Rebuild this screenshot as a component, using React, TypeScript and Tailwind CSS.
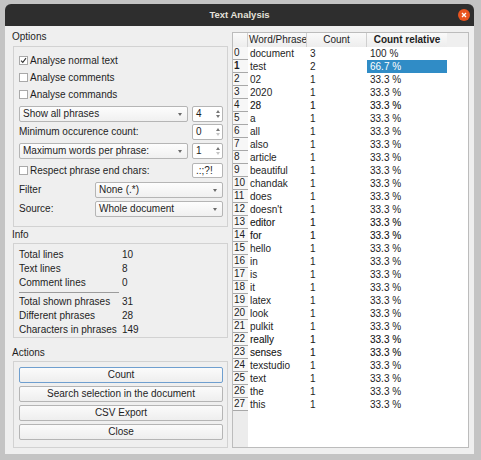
import React from "react";

type Row = { word: string; count: number; rel: string };

const WORDS = [
  "document", "test", "02", "2020", "28", "a", "all", "also", "article", "beautiful",
  "chandak", "does", "doesn't", "editor", "for", "hello", "in", "is", "it", "latex",
  "look", "pulkit", "really", "senses", "texstudio", "text", "the", "this",
];

const ROWS: Row[] = WORDS.map((w, i) => ({
  word: w,
  count: i === 0 ? 3 : i === 1 ? 2 : 1,
  rel: i === 0 ? "100 %" : i === 1 ? "66.7 %" : "33.3 %",
}));

// rows that render a little heavier in the screenshot
const HEAVY = [4, 13, 14, 22, 23];

function CheckBox({ checked, label }: { checked?: boolean; label: string }) {
  return (
    <div className="flex items-center gap-[2px]">
      <span className="w-[9px] h-[9px] bg-white border border-[#a9a9a9] flex items-center justify-center">
        {checked && (
          <svg width="7" height="7" viewBox="0 0 7 7">
            <path d="M1 3.6 L2.8 5.4 L6 1.2" stroke="#333" strokeWidth="1.1" fill="none" />
          </svg>
        )}
      </span>
      <span>{label}</span>
    </div>
  );
}

function Combo({ text, className }: { text: string; className: string }) {
  return (
    <div
      className={`h-[16px] border border-[#b5b5b5] rounded-[2px] bg-gradient-to-b from-[#fdfdfd] to-[#f0f0f0] flex items-center pl-[3px] pr-[5px] ${className}`}
    >
      <span className="flex-1 whitespace-nowrap">{text}</span>
      <span className="w-0 h-0 border-x-[2.5px] border-x-transparent border-t-[3px] border-t-[#6a6a6a]" />
    </div>
  );
}

function Spin({ value, downOff }: { value: string; downOff?: boolean }) {
  return (
    <div className="w-[31px] h-[16px] border border-[#b5b5b5] rounded-[2px] bg-white flex items-center">
      <span className="flex-1 pl-[3px]">{value}</span>
      <div className="w-[9px] h-full flex flex-col items-center justify-center gap-[2px]">
        <span className="w-0 h-0 border-x-[2.5px] border-x-transparent border-b-[3px] border-b-[#777]" />
        <span
          className={`w-0 h-0 border-x-[2.5px] border-x-transparent border-t-[3px] ${
            downOff ? "border-t-[#c4c4c4]" : "border-t-[#777]"
          }`}
        />
      </div>
    </div>
  );
}

function InfoLine({ label, value }: { label: string; value: string }) {
  return (
    <div className="h-[14px] flex items-center">
      <span className="w-[103px] whitespace-nowrap">{label}</span>
      <span>{value}</span>
    </div>
  );
}

function Button({ label, focus }: { label: string; focus?: boolean }) {
  return (
    <div
      className={`h-[16px] rounded-[2px] flex items-center justify-center bg-gradient-to-b from-[#fbfbfb] to-[#eeeeee] border ${
        focus ? "border-[#6f9fcf]" : "border-[#b5b5b5]"
      }`}
    >
      {label}
    </div>
  );
}

export default function App() {
  return (
    <div className="w-[481px] h-[460px] bg-[#c4c4c4] pt-[4px] pl-[5px] font-['Liberation_Sans',Arial,sans-serif] text-[10px] leading-none text-[#1e1e1e]">
      <div className="w-[469px] h-[450px] rounded-t-[6px] overflow-hidden flex flex-col">
        {/* title bar */}
        <div className="h-[22px] bg-[#2e2e2e] flex items-center justify-center relative">
          <span className="font-bold text-[9.5px] text-[#e4e1da]">Text Analysis</span>
          <span className="absolute right-[4px] top-[5px] w-[12px] h-[12px] rounded-full bg-[#e9541f] flex items-center justify-center">
            <svg width="6" height="6" viewBox="0 0 6 6">
              <path d="M1 1 L5 5 M5 1 L1 5" stroke="#fff" strokeWidth="1.3" />
            </svg>
          </span>
        </div>

        {/* body */}
        <div className="flex-1 bg-[#efefef] flex">
          {/* left panel */}
          <div className="w-[223px] flex flex-col">
            <div className="h-[20px] pt-[2px] pl-[7px] flex items-center">Options</div>
            <div className="ml-[8px] w-[215px] h-[181px] border border-[#d2d2d2] pt-[5px] pl-[5px] pr-[4px] flex flex-col">
              <div className="h-[17px] flex items-center">
                <CheckBox checked label="Analyse normal text" />
              </div>
              <div className="h-[17px] flex items-center">
                <CheckBox label="Analyse comments" />
              </div>
              <div className="h-[17px] flex items-center">
                <CheckBox label="Analyse commands" />
              </div>
              <div className="mt-[3px] flex gap-[4px]">
                <Combo text="Show all phrases" className="w-[169px]" />
                <Spin value="4" />
              </div>
              <div className="mt-[2px] h-[16px] flex items-center">
                <span className="flex-1">Minimum occurence count:</span>
                <Spin value="0" downOff />
              </div>
              <div className="mt-[3px] flex gap-[4px]">
                <Combo text="Maximum words per phrase:" className="w-[169px]" />
                <Spin value="1" downOff />
              </div>
              <div className="mt-[4px] h-[15px] flex items-center">
                <div className="flex-1">
                  <CheckBox label="Respect phrase end chars:" />
                </div>
                <div className="w-[31px] h-[15px] border border-[#b5b5b5] rounded-[2px] bg-white flex items-center pl-[3px]">
                  .:;?!
                </div>
              </div>
              <div className="mt-[4px] h-[16px] flex items-center">
                <span className="w-[76px]">Filter</span>
                <Combo text="None (.*)" className="w-[128px]" />
              </div>
              <div className="mt-[3px] h-[16px] flex items-center">
                <span className="w-[76px]">Source:</span>
                <Combo text="Whole document" className="w-[128px]" />
              </div>
            </div>

            <div className="h-[16px] pl-[7px] flex items-center">Info</div>
            <div className="ml-[8px] w-[215px] h-[95px] border border-[#d2d2d2] pt-[4px] pl-[5px] flex flex-col">
              <InfoLine label="Total lines" value="10" />
              <InfoLine label="Text lines" value="8" />
              <InfoLine label="Comment lines" value="0" />
              <div className="mt-[2px] mb-[2px] w-[100px] h-px bg-[#9c9c9c]" />
              <InfoLine label="Total shown phrases" value="31" />
              <InfoLine label="Different phrases" value="28" />
              <InfoLine label="Characters in phrases" value="149" />
            </div>

            <div className="h-[23px] pt-[7px] pl-[7px] flex items-center">Actions</div>
            <div className="ml-[8px] w-[215px] h-[87px] border border-[#d2d2d2] pt-[5px] pl-[5px] pr-[4px] flex flex-col gap-[3px]">
              <Button label="Count" focus />
              <Button label="Search selection in the document" />
              <Button label="CSV Export" />
              <Button label="Close" />
            </div>
          </div>

          {/* results table */}
          <div className="ml-[4px] mt-[6px] w-[237px] h-[416px] border border-[#bcbcbc] flex">
            <div className="w-[15px] bg-[#ececec] flex flex-col">
              <div className="h-[14px] bg-gradient-to-b from-[#fafafa] to-[#ededed] border-r border-[#d0d0d0]" />
              {ROWS.map((_, i) => (
                <div
                  key={i}
                  className={`h-[13px] pl-[1px] bg-[#f7f7f7] border-b border-[#a8a8a8] flex items-center ${
                    i === 1 ? "font-bold" : ""
                  }`}
                >
                  {i}
                </div>
              ))}
            </div>
            <div className="flex-1 bg-white flex flex-col">
              <div className="h-[14px] bg-[#efefef] flex">
                <div className="w-[59px] border-r border-[#cfcfcf] bg-gradient-to-b from-[#fafafa] to-[#ededed] flex items-center pl-[1px] whitespace-nowrap overflow-hidden">
                  Word/Phrase
                </div>
                <div className="w-[60px] border-r border-[#cfcfcf] bg-gradient-to-b from-[#fafafa] to-[#ededed] flex items-center justify-center">
                  Count
                </div>
                <div className="w-[80px] bg-gradient-to-b from-[#fafafa] to-[#ededed] flex items-center justify-center font-bold">
                  Count relative
                </div>
              </div>
              {ROWS.map((r, i) => (
                <div
                  key={i}
                  className={`h-[13px] flex items-center ${
                    HEAVY.includes(i) ? "[text-shadow:0.2px_0_0_rgba(30,30,30,0.35)]" : ""
                  }`}
                >
                  <span className="w-[59px] pl-[2px] whitespace-nowrap">{r.word}</span>
                  <span className="w-[60px] pl-[3px]">{r.count}</span>
                  <span
                    className={`w-[80px] h-full pl-[3px] flex items-center ${
                      i === 1 ? "bg-[#308cc6] text-white" : ""
                    }`}
                  >
                    {r.rel}
                  </span>
                </div>
              ))}
            </div>
          </div>
        </div>
      </div>
    </div>
  );
}
